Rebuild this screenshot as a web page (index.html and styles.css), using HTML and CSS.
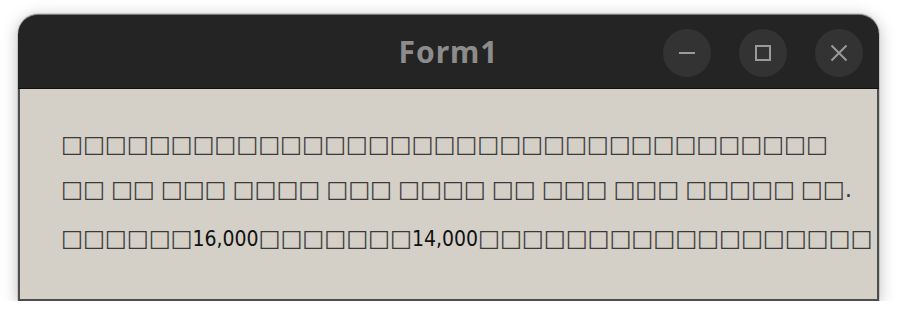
FILE: index.html
```html
<!DOCTYPE html>
<html lang="ko">
<head>
<meta charset="utf-8">
<title>Form1</title>
<link rel="stylesheet" href="styles.css">
</head>
<body>
<div class="window">
  <header class="titlebar">
    <div class="title">Form1</div>
    <div class="controls">
      <button class="ctl" aria-label="Minimize">
        <svg width="20" height="20" viewBox="0 0 20 20"><line x1="2" y1="10" x2="18" y2="10" stroke="#9a9a9a" stroke-width="2"/></svg>
      </button>
      <button class="ctl" aria-label="Maximize">
        <svg width="20" height="20" viewBox="0 0 20 20"><rect x="3" y="3" width="14" height="14" fill="none" stroke="#9a9a9a" stroke-width="2"/></svg>
      </button>
      <button class="ctl" aria-label="Close">
        <svg width="20" height="20" viewBox="0 0 20 20"><path d="M2.5 2.5 L17.5 17.5 M17.5 2.5 L2.5 17.5" stroke="#9a9a9a" stroke-width="2" fill="none"/></svg>
      </button>
    </div>
  </header>
  <main class="client">
    <p class="line">□□□□□□□□□□□□□□□□□□□□□□□□□□□□□□□□□□□</p>
    <p class="line">□□ □□ □□□ □□□□ □□□ □□□□ □□ □□□ □□□ □□□□□ □□.</p>
    <p class="line line3">□□□□□□<span class="num">16,000</span>□□□□□□□<span class="num">14,000</span>□□□□□□□□□□□□□□□□□□</p>
  </main>
</div>
</body>
</html>
```
FILE: styles.css
```css
html, body {
  margin: 0;
  padding: 0;
  background: #ffffff;
}

.window {
  margin: 14px 0 0 18px;
  width: 861px;
  height: 287px;
  display: flex;
  flex-direction: column;
  border-radius: 20px 20px 0 0;
  box-shadow: 0 3px 16px rgba(0, 0, 0, 0.28), 0 0 0 1px rgba(0, 0, 0, 0.12);
}

.titlebar {
  position: relative;
  height: 75px;
  flex: none;
  display: flex;
  align-items: center;
  justify-content: flex-end;
  background: #242424;
  border-radius: 20px 20px 0 0;
  border-top: 1px solid #7a7a7a;
  border-bottom: 1px solid #111111;
  box-sizing: border-box;
  padding-right: 16px;
}

.title {
  position: absolute;
  left: 0;
  right: 0;
  top: 18px;
  text-align: center;
  font-family: "Noto Sans", "DejaVu Sans", sans-serif;
  font-weight: 700;
  font-size: 30px;
  letter-spacing: 1px;
  line-height: 38px;
  color: #8c8c8c;
}

.controls {
  display: flex;
  gap: 28px;
  margin-top: 2px;
}

.ctl {
  width: 48px;
  height: 48px;
  border-radius: 50%;
  border: 0;
  padding: 0;
  margin: 0;
  background: #333333;
  display: flex;
  align-items: center;
  justify-content: center;
}

.ctl svg {
  display: block;
}

.client {
  flex: 1;
  background: #d4d0c8;
  border: 2px solid #4e4e4e;
  border-top: 0;
  padding: 32px 0 0 41px;
  box-sizing: border-box;
}

.line {
  margin: 0;
  font-family: "DejaVu Sans", sans-serif;
  font-size: 23.2px;
  word-spacing: -1.3px;
  line-height: 45px;
  color: #3a3a3a;
  white-space: nowrap;
}

.line3 {
  margin-top: 4px;
}

.num {
  font-family: "DejaVu Sans Condensed", "DejaVu Sans", sans-serif;
  font-stretch: condensed;
  font-size: 21px;
  color: #111111;
}
```
